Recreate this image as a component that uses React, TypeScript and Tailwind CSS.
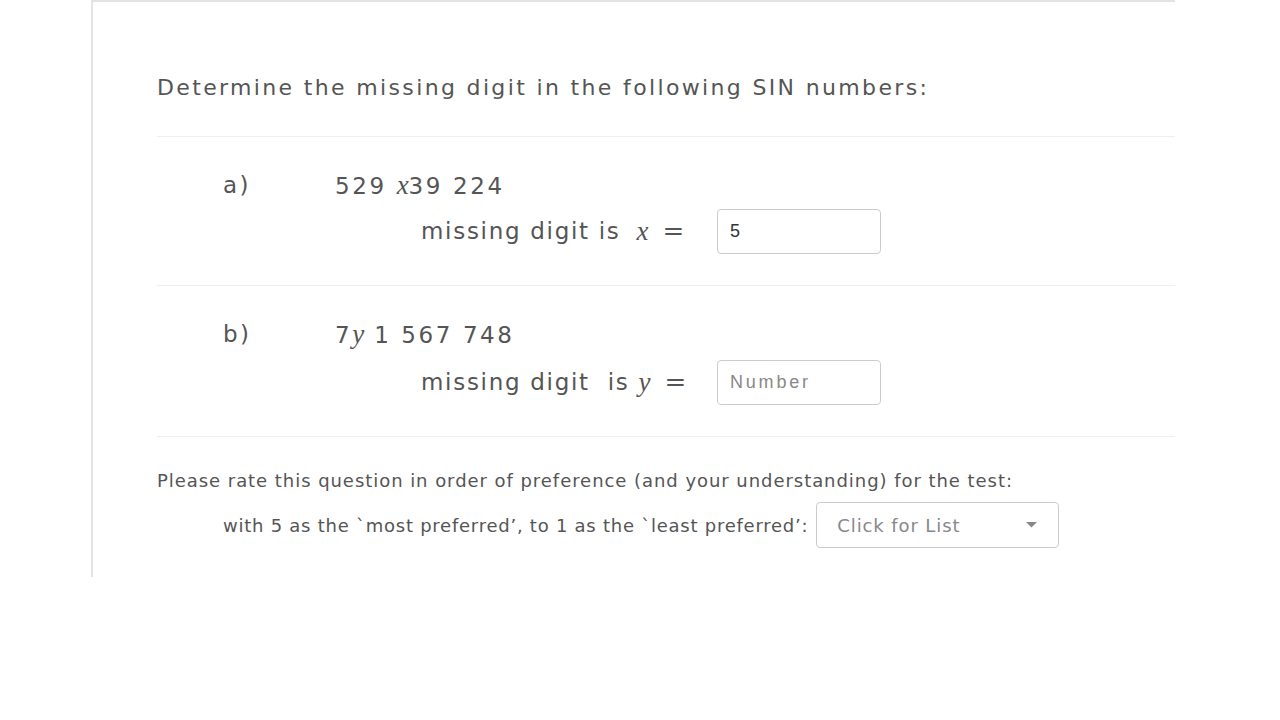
import { useState } from "react";

const mathFont = { fontFamily: '"Liberation Serif", "DejaVu Serif", serif' };

function MathVar({ name }: { name: string }) {
  return (
    <span className="italic text-[27px] tracking-normal" style={mathFont}>
      {name}
    </span>
  );
}

function Equals() {
  return (
    <span
      className="text-[26px] tracking-normal ml-[14px] mr-[12px]"
      style={{ fontFamily: '"DejaVu Serif", serif' }}
    >
      =
    </span>
  );
}

function Part({
  label,
  number,
  prompt,
  value,
  onChange,
  gap,
}: {
  label: string;
  number: React.ReactNode;
  prompt: React.ReactNode;
  value: string;
  onChange: (v: string) => void;
  gap: string;
}) {
  return (
    <div className="border-b border-[#eeeeee] pt-[31px] pb-[31px]">
      <div className="flex items-center h-[34px] pl-[66px]">
        <span className="w-[112px] tracking-[2.5px]">{label}</span>
        <span className="tracking-[2.6px]">{number}</span>
      </div>
      <div className={`flex items-center h-[45px] pl-[264px] ${gap}`}>
        <span className="w-[296px] flex items-center">{prompt}</span>
        <input
          value={value}
          onChange={(e) => onChange(e.target.value)}
          placeholder="Number"
          className="w-[164px] h-[45px] border border-[#cccccc] rounded-[4px] px-[12px] text-[18px] tracking-[2.8px] text-[#333] placeholder:text-[#888] outline-none"
          style={{ fontFamily: '"Liberation Sans", Arial, sans-serif' }}
        />
      </div>
    </div>
  );
}

export default function App() {
  const [x, setX] = useState("5");
  const [y, setY] = useState("");

  return (
    <div
      className="w-[1280px] h-[720px] bg-white text-[#555555]"
      style={{ fontFamily: '"DejaVu Sans", Verdana, sans-serif' }}
    >
      <div className="ml-[91px] w-[1084px] h-[577px] border-l-2 border-t-2 border-[#e3e3e3] pl-[64px]">
        <div className="pt-[73px] pb-[35px] border-b border-[#eeeeee] text-[22px] leading-[26px] tracking-[2.35px]">
          Determine the missing digit in the following SIN numbers:
        </div>
        <div className="text-[23px] tracking-[1.7px]">
          <Part
            gap="mt-[7px]"
            label="a)"
            number={
              <>
                529 <MathVar name="x" />
                39 224
              </>
            }
            prompt={
              <>
                missing digit is<span className="w-[16px]" />
                <MathVar name="x" />
                <Equals />
              </>
            }
            value={x}
            onChange={setX}
          />
          <Part
            gap="mt-[9px]"
            label="b)"
            number={
              <>
                7<MathVar name="y" /> 1 567 748
              </>
            }
            prompt={
              <>
                missing digit&nbsp; is&nbsp;<MathVar name="y" />
                <Equals />
              </>
            }
            value={y}
            onChange={setY}
          />
        </div>
        <div className="pt-[32px] text-[18px] tracking-[0.95px]">
          <div className="leading-[24px]">
            Please rate this question in order of preference (and your understanding) for the test:
          </div>
          <div className="flex items-center mt-[9px] pl-[66px]">
            <span className="tracking-[0.75px]">
              with 5 as the `most preferred’, to 1 as the `least preferred’:
            </span>
            <button className="ml-[8px] w-[243px] h-[46px] border border-[#cccccc] rounded-[4px] flex items-center justify-between pl-[20px] pr-[21px] text-[#888]">
              <span className="text-[18px] tracking-[0.9px]">Click for List</span>
              <svg width="11" height="6" viewBox="0 0 11 6">
                <path d="M0 0 L11 0 L5.5 5.5 Z" fill="#888" />
              </svg>
            </button>
          </div>
        </div>
      </div>
    </div>
  );
}
